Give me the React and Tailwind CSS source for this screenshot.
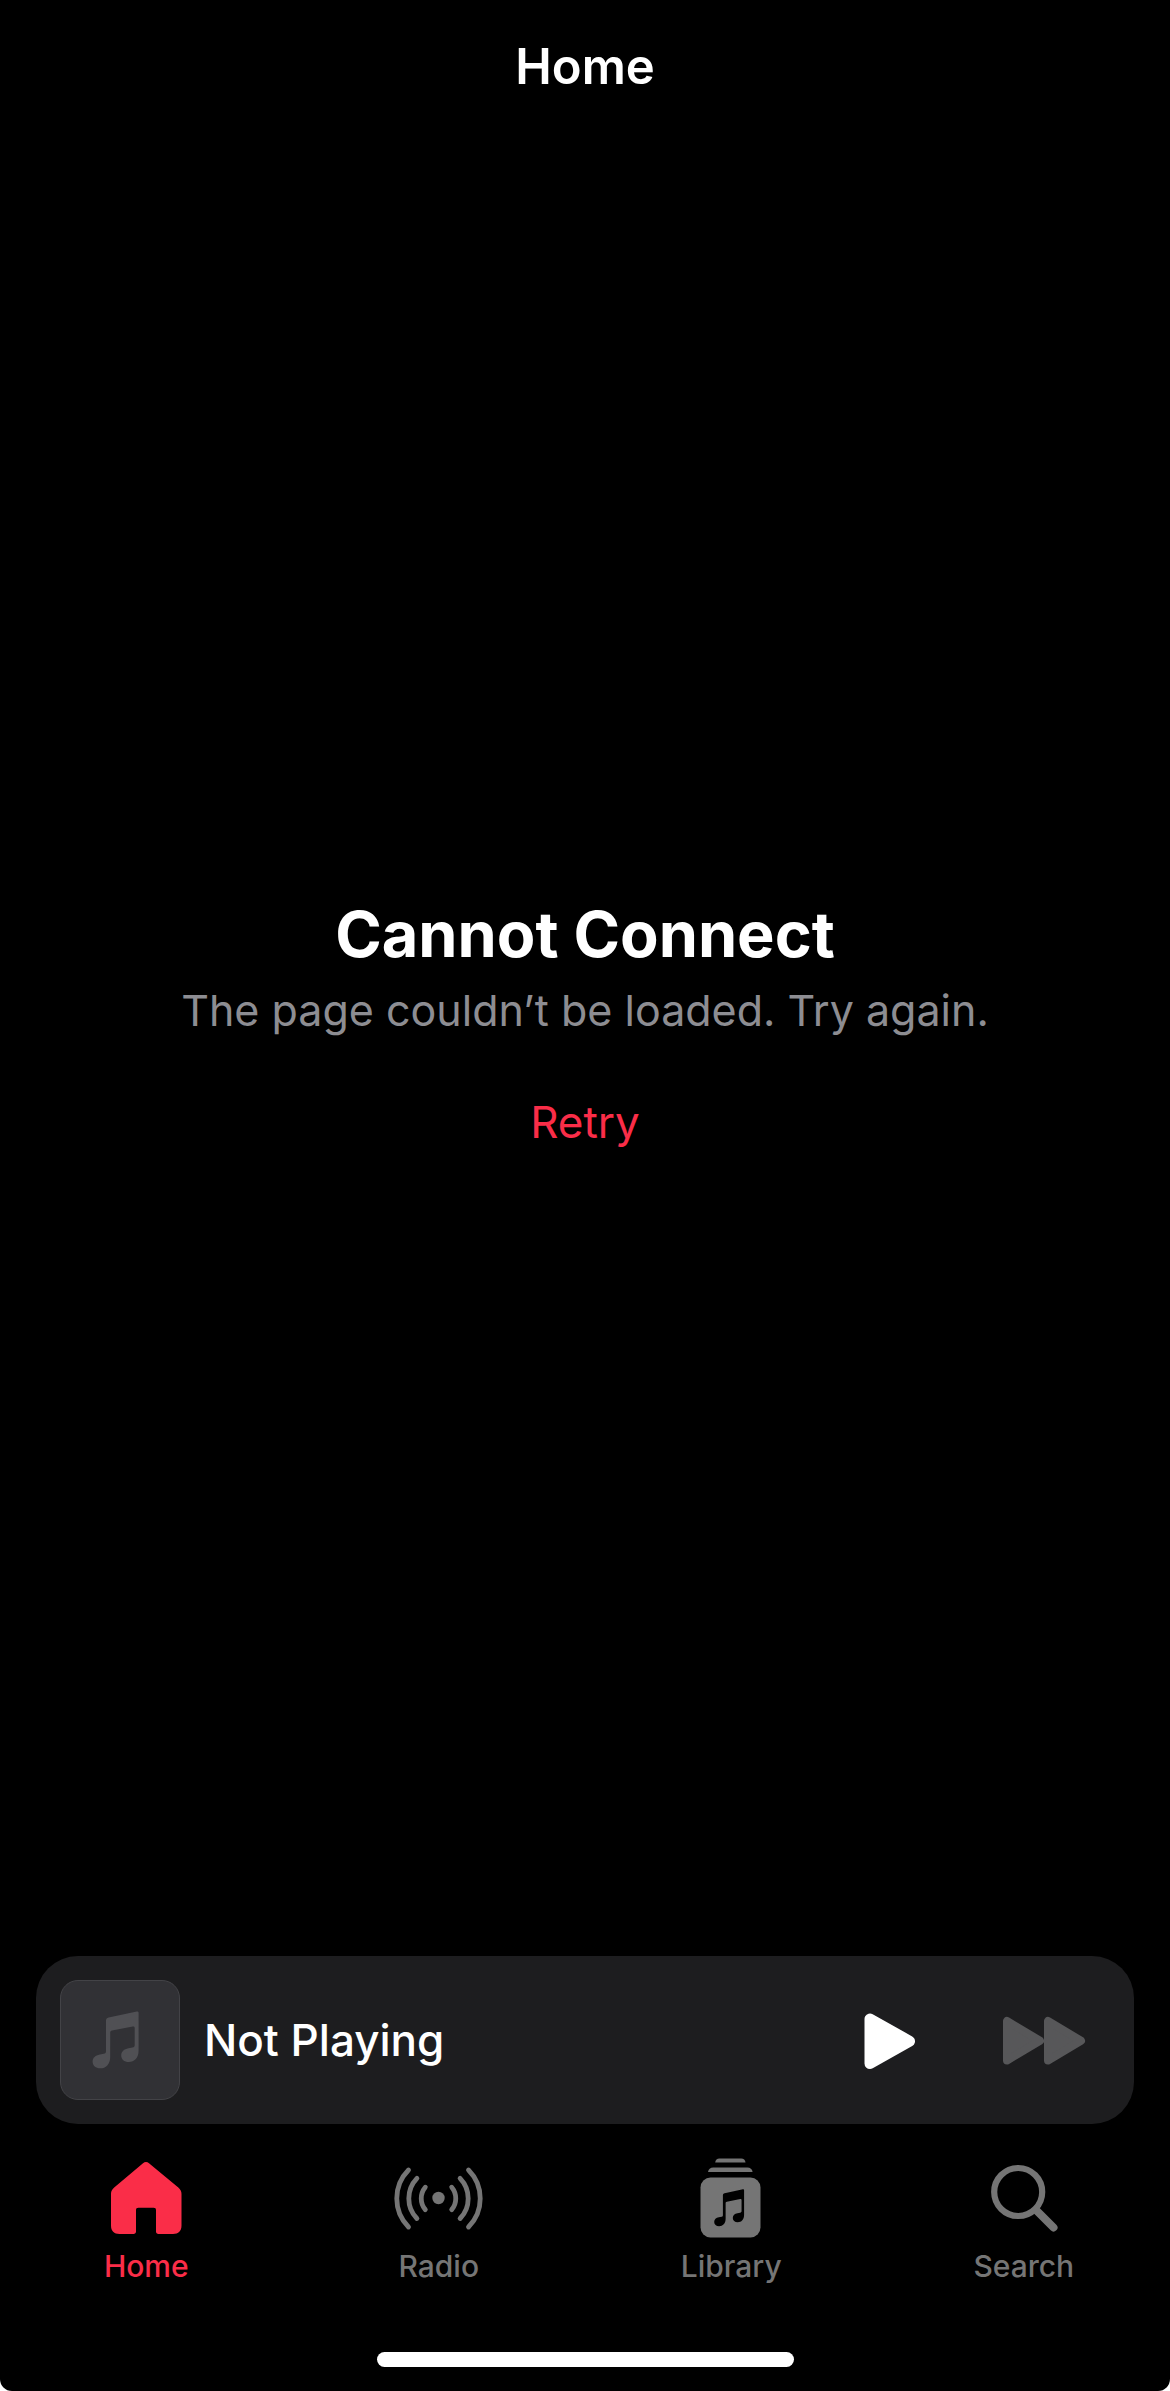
import React from 'react';

const HomeIcon = () => (
  <svg viewBox="0 0 80 80" className="size-20" fill="currentColor" aria-hidden="true">
    <path d="M37 5.200c1.800-1.600 4.200-1.600 6 0L72.300 29.500c2.200 1.900 3.200 3.700 3.200 6.500v31.500c0 5.500-3 8.500-8.500 8.500H52.500c-1.600 0-2.500-.9-2.500-2.500V52.200c0-1.600-.8-2.400-2.400-2.400H32.400c-1.600 0-2.400.8-2.400 2.400v21.300c0 1.600-.9 2.500-2.500 2.500H13.500c-5.500 0-8.500-3-8.500-8.500V36c0-2.800 1-4.600 3.200-6.500z" />
  </svg>
);

const RadioIcon = () => (
  <svg
    viewBox="0 0 96 80"
    className="h-20 w-24"
    fill="none"
    stroke="currentColor"
    strokeWidth="4.800"
    strokeLinecap="round"
    aria-hidden="true"
  >
    <circle cx="47.500" cy="40" r="6.200" fill="currentColor" stroke="none" />
    <path d="M34.300 29.200a17.500 17.500 0 0 0 0 22.400M60.700 29.200a17.500 17.500 0 0 1 0 22.400" />
    <path d="M25.900 20.300a29 29 0 0 0 0 40.200M69.100 20.300a29 29 0 0 1 0 40.200" />
    <path d="M17.500 12a40.500 40.500 0 0 0 0 57M77.500 12a40.500 40.500 0 0 1 0 57" />
  </svg>
);

const NotePath = () => (
  <path d="M44.800 0.500C46 .3 46.600.8 46.600 2v37.500c0 7.500-4.200 11.500-9.800 11.500-4.600 0-7.600-2.700-7.600-6.500 0-4 2.900-6.400 7.200-7.200l4-.8c1.700-.3 2.300-1 2.300-2.500V17c0-1.300-.7-1.800-2-1.500L20 19.600c-1.300.3-1.800 1-1.800 2.300v24c0 7.300-4.400 11.400-10 11.400-4.500 0-7.600-2.700-7.600-6.500 0-4 2.900-6.400 7.200-7.200l4-.8c1.500-.3 2.200-1.100 2.200-2.500V9.800c0-1.800.9-2.900 2.600-3.300z" />
);

const LibraryIcon = () => (
  <svg viewBox="0 0 80 80" className="size-20" fill="currentColor" aria-hidden="true">
    <path d="M24.200 4.600C24.500 1.800 26 .5 28.500.5h21.700c2.500 0 4 1.300 4.300 4.100z" />
    <path d="M17 14c.5-3 2.300-4.500 5.300-4.500h34c3 0 4.800 1.500 5.300 4.500z" />
    <rect x="9.500" y="19.500" width="60" height="60" rx="10" />
    <g fill="#000" transform="translate(22.800 31) scale(.65)">
      <NotePath />
    </g>
  </svg>
);

const SearchIcon = () => (
  <svg
    viewBox="0 0 80 80"
    className="size-20"
    fill="none"
    stroke="currentColor"
    strokeLinecap="round"
    aria-hidden="true"
  >
    <circle cx="34.200" cy="34" r="24" strokeWidth="6.200" />
    <path d="M52 52l17.500 17.500" strokeWidth="8" />
  </svg>
);

const tabs = [
  { label: 'Home', Icon: HomeIcon, active: true },
  { label: 'Radio', Icon: RadioIcon },
  { label: 'Library', Icon: LibraryIcon },
  { label: 'Search', Icon: SearchIcon },
];

const MiniPlayer = () => (
  <section
    aria-label="Player"
    className="mx-9 flex items-center rounded-[42px] bg-[#1d1d1f] p-6 pr-10"
  >
    <div className="flex size-[120px] items-center justify-center rounded-[18px] border border-[#434347] bg-[#313135] text-[#505054]">
      <svg viewBox="0 0 56 58" className="h-[58px] w-14" fill="currentColor" aria-hidden="true">
        <NotePath />
      </svg>
    </div>
    <p className="ml-6 flex-1 text-[44px] leading-14 font-medium">Not Playing</p>
    <button type="button" aria-label="Play" className="mr-18">
      <svg
        viewBox="0 0 72 72"
        className="size-18"
        fill="currentColor"
        stroke="currentColor"
        strokeWidth="11"
        strokeLinejoin="round"
        aria-hidden="true"
      >
        <path d="M16 15v44.500L55.500 37.200z" />
      </svg>
    </button>
    <button type="button" aria-label="Next" disabled className="text-[#575759]">
      <svg
        viewBox="0 0 96 72"
        className="h-18 w-24"
        fill="currentColor"
        stroke="currentColor"
        strokeWidth="8"
        strokeLinejoin="round"
        aria-hidden="true"
      >
        <path d="M9 17v39.500l33-19.800zM50 17v39.500l33-19.800z" />
      </svg>
    </button>
  </section>
);

const App = () => {
  return (
    <div className="min-h-screen bg-white font-['Inter',sans-serif] text-white">
      <div className="flex min-h-screen flex-col rounded-b-xl bg-black">
        <header className="flex h-33 items-center justify-center pt-0.5">
          <h1 className="text-[49px] leading-16 font-semibold">Home</h1>
        </header>

        <main className="flex flex-1 flex-col items-center justify-center text-center">
          <h2 className="text-[63px] leading-20 font-bold">Cannot Connect</h2>
          <p className="mt-2 text-[43px] leading-14 text-[#8d8d92]">
            The page couldn’t be loaded. Try again.
          </p>
          <button type="button" className="mt-14 text-[44px] leading-14 text-[#fa2d48]">
            Retry
          </button>
        </main>

        <footer className="pt-11">
          <MiniPlayer />
          <nav className="mt-[34px] grid grid-cols-4">
            {tabs.map(({ label, Icon, active }) => (
              <a
                key={label}
                href={`#${label.toLowerCase()}`}
                aria-current={active ? 'page' : undefined}
                className={`flex flex-col items-center gap-2.5 ${
                  active ? 'text-[#fa2d48]' : 'text-[#757575]'
                }`}
              >
                <Icon />
                <span className="text-[30px] leading-9 font-medium">{label}</span>
              </a>
            ))}
          </nav>
          <div className="mx-auto mt-17 mb-6 h-[15px] w-[417px] rounded-full bg-white" />
        </footer>
      </div>
    </div>
  );
};

export default App;
